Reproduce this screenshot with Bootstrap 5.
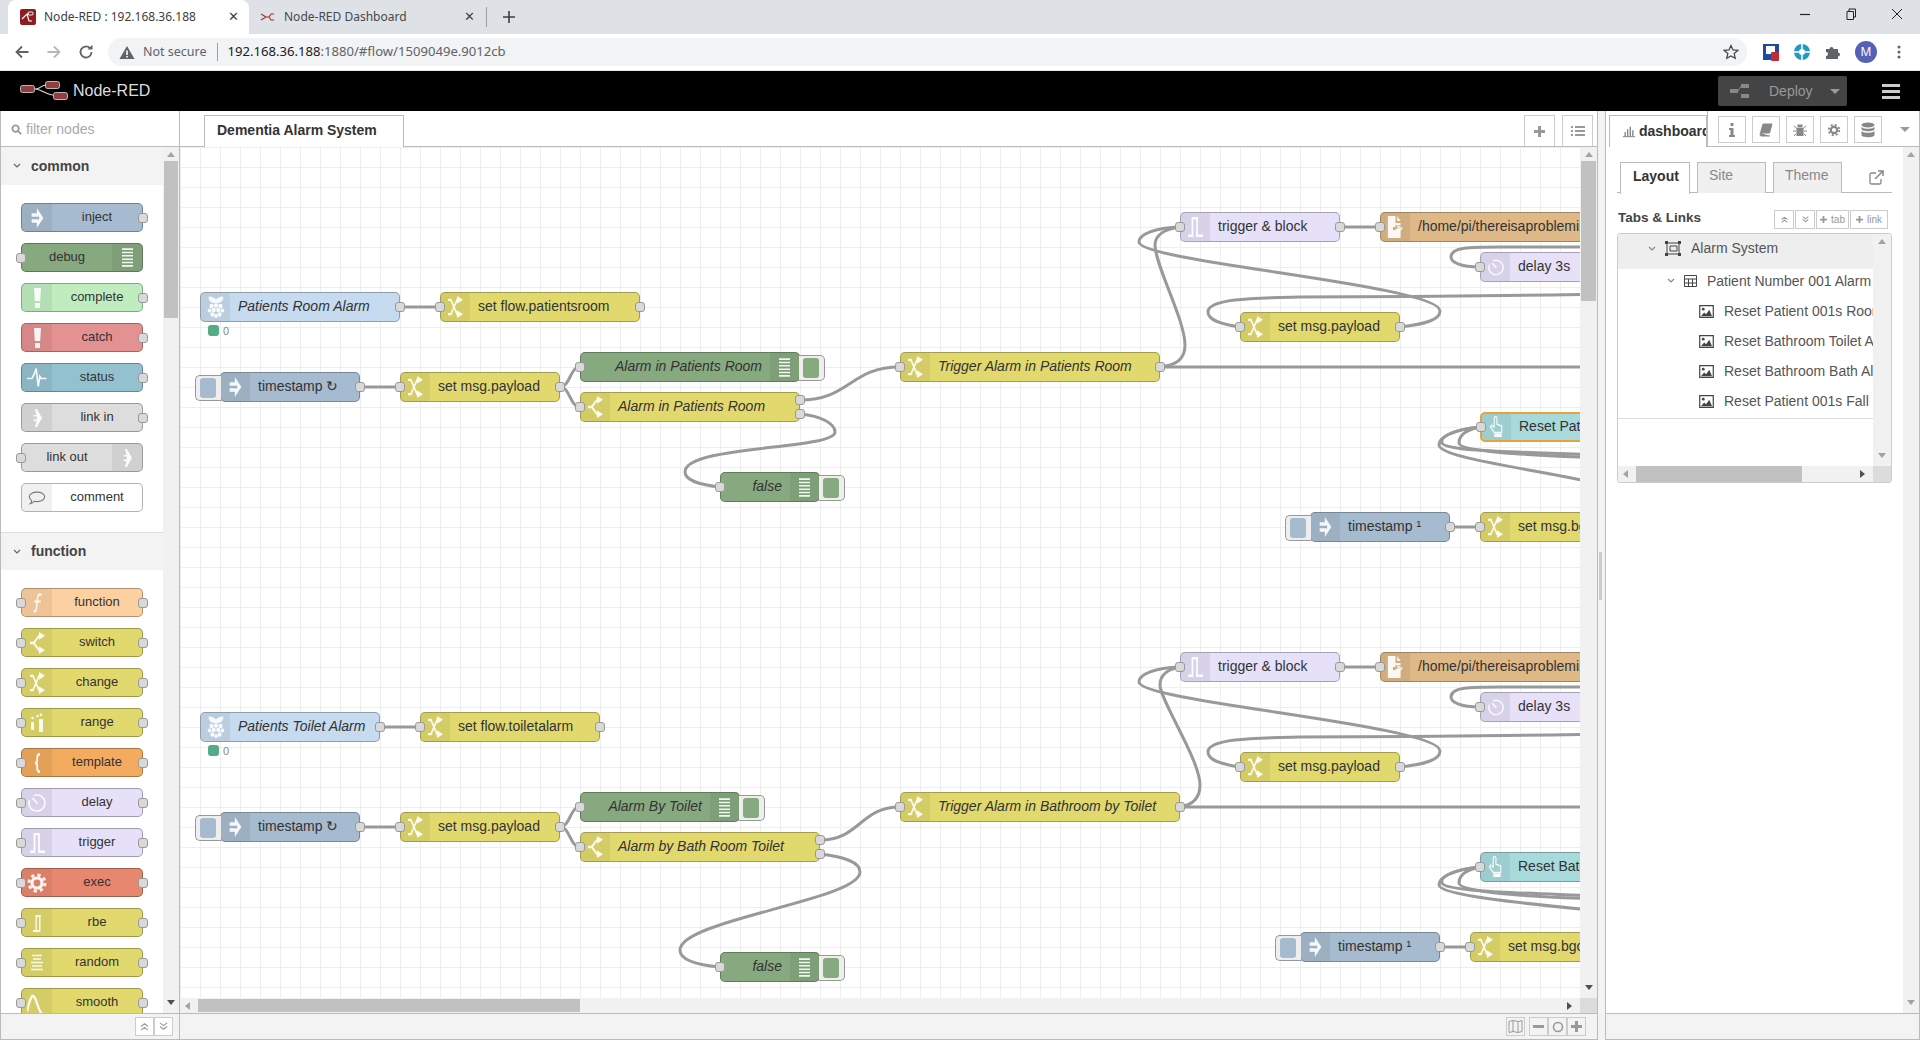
<!DOCTYPE html>
<html lang="en">
<head>
<meta charset="utf-8">
<title>Node-RED : 192.168.36.188</title>
<link href="https://cdn.jsdelivr.net/npm/bootstrap@5.3.0/dist/css/bootstrap.min.css" rel="stylesheet">
<style>
html,body{height:1040px;overflow:hidden}
body{font-family:"Liberation Sans",Arial,sans-serif;font-size:14px;color:#333;background:#fff}
.ui{font-family:"Noto Sans","Liberation Sans",sans-serif}
/* browser chrome */
.tabstrip{height:34px;background:#dee1e6;padding-left:8px;flex:none}
.ctab{width:241px;height:34px;font-size:12px;color:#45494d;padding-left:12px;border-radius:8px 8px 0 0}
.ctab.on{background:#fff;color:#3c4043}
.ctab .ttl{margin-left:8px;flex-grow:1;white-space:nowrap}
.ctab .xb{margin-right:10px;color:#444;font-size:13px}
.ctab2{width:236px;padding-left:11px}
.csep{width:1px;height:20px;background:#9aa0a6;margin-left:1px;margin-top:7px}
.plusb{margin-left:15px;margin-top:7px}
.winbtns{margin-left:auto;margin-right:16px;gap:32px;margin-top:7px;height:14px}
.toolbar{height:37px;background:#fff;flex:none;border-bottom:1px solid #e8e8e8}
.tb-nav{width:108px;padding-left:14px;gap:16px}
.omni{width:1639px;height:28px;background:#f1f3f4;border-radius:14px;font-size:12.5px;padding-left:11px;color:#5f6368}
.omni .bar{width:1px;height:18px;background:#9aa0a6;margin:0 10px}
.omni .addr{font-size:13.1px}
.omni .host{color:#202124}
.omni .star{margin-left:auto;margin-right:8px}
.ext{margin-left:16px;gap:14px}
.avatar{width:22px;height:22px;border-radius:50%;background:#5561b8;color:#fff;font-size:12px}
/* header */
.nr-head{height:40px;background:#000;flex:none;color:#ddd;font-size:16px;padding-left:20px}
.nr-title{margin-left:5px}
.deploy{width:129px;height:30px;background:#444;color:#999;border:0;border-radius:2px;padding:0 0 0 12px;font-size:14px;margin-left:auto}
.deploy:hover{background:#444;color:#999}
.dep-t{margin-left:19px}
.dep-c{margin-left:17px;border-top-color:#bbb}
.burger{width:18px;margin:0 20px 0 35px;gap:3px}
.burger span{height:3px;background:#ccc;display:block}
/* shell */
.shell{height:929px;flex:none}
.palette{width:180px;flex:none;border-left:1px solid #bbb;border-right:1px solid #bbb;background:#f3f3f3}
.pal-filter{height:36px;background:#fff;border-bottom:1px solid #bbb;color:#aaa;padding:1px 0 0 10px;flex:none}
.pal-body{height:866px;flex:none}
.pal-list{width:162px;flex:none;background:#fff}
.pal-cat{height:38px;background:#f3f3f3;padding-left:12px;font-weight:700;color:#444;font-size:14px;flex:none}
.pal-cat span{margin-left:10px}
.pal-cat2{border-top:1px solid #ddd}
.pal-items{padding:18px 0 9px 20px}
.pal-node{width:122px;height:29px;margin-bottom:11px;border:1px solid rgba(0,0,0,.3);border-radius:5px;font-size:13px;color:#333}
.pal-node .lbl{flex-grow:1;text-align:center;padding-bottom:1px}
.pal-node .ni{width:30px;height:100%;flex:none;background:rgba(0,0,0,.06);color:rgba(255,255,255,.9)}
.pal-node .ni.rr{border-radius:0 4px 4px 0}
.pal-node .ni.ll{border-radius:4px 0 0 4px}
.pal-foot{height:27px;background:#f3f3f3;border-top:1px solid #bbb;border-bottom:1px solid #bbb;padding-right:6px;flex:none}
.mini{width:19px;height:19px;background:#fff;border:1px solid #ccc;color:#999}
.sbar-v{width:16px;flex:none;background:#f1f1f1}
.thumb-v{height:157px;background:#c1c1c1;margin:0 1px}
.au,.ad,.al,.ar{display:block;width:0;height:0;border:4px solid transparent}
.au{border-top:0;border-bottom-color:#a3a3a3;border-bottom-width:5px;margin:5px auto 4px}
.ad{border-bottom:0;border-top-color:#505050;border-top-width:5px}
.ad.pale{border-top-color:#a3a3a3}
.al{border-left:0;border-right-color:#a3a3a3;border-right-width:5px}
.ar{border-right:0;border-left-color:#505050;border-left-width:5px}
/* ports shared */
.prt{position:absolute;width:10px;height:10px;background:#d9d9d9;border:1px solid #999;border-radius:3px;top:50%;margin-top:-5px}
.prt.lf{left:-6px}
.prt.rt{right:-6px}
.prt.up{top:8px;margin-top:-6px}
.prt.dn{top:21px;margin-top:-5px}
/* icon sizes */
.i-a{width:13px;height:20px}
.i-b{width:15px;height:22px}
.i-c{width:18px;height:22px}
.i-d{width:18px;height:19px}
.i-e{width:17px;height:22px}
.i-f{width:12px;height:18px}
.i-g{width:11px;height:19px}
/* colours */
.cy{background:#e2d96e}.cd{background:#87a980}.ci{background:#a6bbcf}.cc{background:#c0edc0}.cr{background:#e49191}
.cs{background:#94c1d0}.cl{background:#ddd}.cw{background:#fff}.cf{background:#fdd0a2}.ct{background:#f2ab5f}
.cv{background:#e6e0f8}.ce{background:#e8876f}.cp{background:#c6dbef}.cb{background:#deb887}.cn{background:#a8dadc}
/* workspace */
.work{width:1417px;flex:none}
.wtabs{height:36px;border-bottom:1px solid #bbb;padding-left:24px;flex:none;background:#fff}
.wtab{width:200px;height:32px;margin-top:4px;border:1px solid #bbb;border-bottom:0;background:#fff;font-weight:700;padding:0 0 2px 12px;font-size:14px;color:#333;margin-bottom:-1px;position:relative}
.wbtn{width:31px;height:31px;margin-top:4px;border:1px solid #ccc;border-bottom:0;color:#999;margin-left:7px}
.wbtn.first{margin-left:auto}
.wbtn.last{margin-right:4px}
.wmid{height:851px;flex:none}
.canvas{width:1400px;height:851px;flex:none;background-color:#fff;background-image:linear-gradient(#eee 1px,transparent 1px),linear-gradient(90deg,#eee 1px,transparent 1px);background-size:20px 20px}
.wires{position:absolute;left:0;top:0;width:1400px;height:851px}
.wires path{fill:none;stroke:#999;stroke-width:3}
.fn{position:absolute;height:30px;border:1px solid rgba(0,0,0,.28);border-radius:5px;font-size:14px;color:#333;white-space:nowrap}
.fn .ni{width:29px;height:100%;flex:none;background:rgba(0,0,0,.06);color:rgba(255,255,255,.9)}
.fn .ni.ll{border-radius:4px 0 0 4px}
.fn .ni.rr{border-radius:0 4px 4px 0}
.fn .lbl{padding:0 8px 1px;overflow:hidden}
.fn .em{font-style:italic}
.fn.sel{border:2px solid #e9a23b}
.nbtn{position:absolute;width:26px;height:26px;background:#eee;border:1px solid #999;top:2px;display:flex;align-items:center}
.nbtn b{display:block;width:16px;height:20px;border-radius:3px}
.nbtn.bl{left:-26px;border-radius:5px 0 0 5px;border-right:0;padding-left:4px}
.nbtn.br{right:-26px;border-radius:0 5px 5px 0;border-left:0;padding-left:4px}
.stat{position:absolute;font-size:11px;color:#888;line-height:12px}
.stat b{display:inline-block;width:11px;height:11px;background:#5a8;border-radius:3px;margin-right:4px;vertical-align:-1px}
.vbar{width:17px;flex:none;background:#f1f1f1}
.vbar .thumb-v{height:140px}
.hbar{height:15px;background:#f1f1f1;flex:none;padding-left:5px}
.thumb-h{width:382px;height:13px;background:#c1c1c1;margin-left:8px}
.corner{width:17px;height:15px;background:#dcdcdc;margin-left:auto}
.wfoot{height:27px;background:#f3f3f3;border-top:1px solid #bbb;border-bottom:1px solid #bbb;flex:none;padding-right:11px;color:#999}
.fbtn{width:19px;height:19px;border:1px solid #ccc;background:#f3f3f3;color:#999}
.split{width:8px;flex:none;background:#f3f3f3;border-left:1px solid #bbb}
.split span{display:block;width:3px;height:48px;background:#ccc;margin-left:1px}
/* sidebar */
.side{width:315px;flex:none;border-left:1px solid #bbb;border-right:1px solid #bbb}
.stabs{height:36px;flex:none}
.stab{width:98px;height:32px;margin-top:4px;margin-left:3px;border:1px solid #bbb;border-bottom:0;font-weight:700;color:#333;padding-left:13px;overflow:hidden;white-space:nowrap;position:relative;z-index:1;margin-bottom:-1px}
.sbtns{flex-grow:1;border-left:1px solid #bbb;border-bottom:1px solid #bbb;padding:2px 0 0 10px;gap:6px}
.sbtn{width:28px;height:27px;border:1px solid #ccc;color:#888;flex:none}
.scar{margin-left:12px}
.car{width:0;height:0;border:5px solid transparent;border-top-color:#999;border-bottom:0;display:block}
.smid{height:866px;flex:none}
.spane{width:297px;flex:none;padding:15px 11px 0 11px;border-top:0}
.itabs{height:31px;border-bottom:1px solid #bbb;padding-left:3px;gap:7px}
.itab{width:69px;height:31px;border:1px solid #bbb;border-bottom:0;background:#f0f0f0;color:#888;font-size:14px;padding:0 0 5px 11px}
.itab.on{background:#fff;color:#333;font-weight:700;margin-bottom:-1px;position:relative;height:32px;width:70px;padding-left:12px}
.xlink{margin-left:auto;margin-right:8px;color:#888;align-self:center}
.tl-head{height:40px;padding-top:17px;font-weight:700;font-size:13.5px;color:#444;flex:none}
.tl-head>span{margin:-2px 0 0 1px}
.tbs{margin-left:auto;gap:1px;margin-right:4px;font-weight:400;font-size:10px;color:#999}
.tb{height:19px;border:1px solid #ccc;background:#fff;color:#999}
.tb.s{width:20px}.tb.m{width:33px}.tb.l{width:38px}
.tree{width:275px;height:250px;border:1px solid #ccc;border-radius:3px;background:#fff;overflow:hidden}
.treebody{height:232px;flex:none}
.treelist{width:255px;flex:none;overflow:hidden;color:#555;font-size:14px}
.tr1{height:35px;background:#eee;padding:0 0 6px 30px;white-space:nowrap;flex:none}
.tr2{height:27px;padding:0 0 3px 49px;white-space:nowrap;flex:none}
.tr3{height:30px;padding-left:81px;white-space:nowrap;flex:none}
.trline{height:3px;border-bottom:1px solid #ddd;flex:none}
.chev{margin-right:9px;flex:none;color:#888}
.tric{margin-right:10px;flex:none;color:#444}
.sbar-t{width:18px;flex:none;background:#f1f1f1}
.hb{height:16px;background:#f1f1f1;padding-left:5px}
.thumb-t{width:166px;height:16px;background:#c1c1c1;margin-left:8px}
.co{width:18px;height:16px;background:#dcdcdc;margin-left:auto}
.sfoot{height:27px;background:#f3f3f3;border-top:1px solid #bbb;border-bottom:1px solid #bbb;flex:none}
</style>
</head>
<body>
<svg class="d-none" xmlns="http://www.w3.org/2000/svg">
<symbol id="i-inject" viewBox="0 0 20 20" preserveAspectRatio="none"><path d="M1 7h10M1 13h10" stroke="currentColor" stroke-width="3.400" fill="none"/><path d="M9 0l10 10-10 10v-5.500l4-4.500-4-4.500z" fill="currentColor"/></symbol>
<symbol id="i-debug" viewBox="0 0 10 17" preserveAspectRatio="none"><path d="M0 1h10M0 4h10M0 7h10M0 10h10M0 13h10M0 16h10" stroke="currentColor" stroke-width="1.400"/></symbol>
<symbol id="i-alert" viewBox="0 0 7 20" preserveAspectRatio="none"><path d="M0 0h7l-.8 13H.8zM1 15h5v5H1z" fill="currentColor"/></symbol>
<symbol id="i-status" viewBox="0 0 20 20"><path d="M0 10.500h5l2-4 2.200-6 2 18 1.600-10 1.200 2h5.500" stroke="currentColor" stroke-width="1.700" fill="none"/></symbol>
<symbol id="i-link" viewBox="0 0 20 20" preserveAspectRatio="none"><path d="M6 1h3l8 9-8 9H6l2.500-6H4v-1.600l5 .1v-3l-5 .1V7h4.500z" fill="currentColor"/></symbol>
<symbol id="i-comment" viewBox="0 0 20 20"><path d="M10 3.500c5 0 8.500 2.300 8.500 5.200S15 14 10 14c-1 0-2-.1-3-.3-1 1.200-2.500 2.200-4.500 2.600 1-1 1.500-2 1.700-3.400C2.500 11.800 1.500 10.300 1.500 8.700 1.500 5.800 5 3.500 10 3.500z" fill="none" stroke="currentColor" stroke-width="1.200"/></symbol>
<symbol id="i-func" viewBox="0 0 20 20" preserveAspectRatio="none"><path d="M16 2c-3.500-1.500-5.500 0-6 3.500l-1.600 10c-.5 3-2.500 3.500-4.400 2.200M5 8.500h10" stroke="currentColor" stroke-width="2.200" fill="none"/></symbol>
<symbol id="i-switch" viewBox="0 0 20 20" preserveAspectRatio="none"><path d="M0 10h5l7-6.500h2M5 10l7 6.500h2" stroke="currentColor" stroke-width="2.200" fill="none"/><path d="M12 0l8 3.500-8 3.500zM12 13l8 3.500-8 3.500z" fill="currentColor"/></symbol>
<symbol id="i-change" viewBox="0 0 20 20" preserveAspectRatio="none"><path d="M0 3.500h4l8 13h2M0 16.500h4l8-13h2" stroke="currentColor" stroke-width="2.100" fill="none"/><path d="M12 0l8 3.500-8 3.500zM12 13l8 3.500-8 3.500z" fill="currentColor"/></symbol>
<symbol id="i-range" viewBox="0 0 20 20"><path d="M4 9h3v8H4zM12 6h4v13h-4z" fill="currentColor"/><circle cx="5.500" cy="5" r="1.300" fill="currentColor"/><circle cx="10.500" cy="3" r="1.300" fill="currentColor"/><circle cx="14" cy="1.800" r="1.300" fill="currentColor"/></symbol>
<symbol id="i-template" viewBox="0 0 20 20" preserveAspectRatio="none"><path d="M14 1c-3.500 0-4.500 1.200-4.500 3.500v3C9.500 9 8.500 10 6 10c2.500 0 3.500 1 3.500 2.500v3c0 2.300 1 3.500 4.500 3.500" stroke="currentColor" stroke-width="2.800" fill="none"/></symbol>
<symbol id="i-delay" viewBox="0 0 20 20"><path d="M7 2.500A8 8 0 1 1 2.500 7" stroke="currentColor" stroke-width="1.500" fill="none"/><path d="M10.500 10.500L5.500 5" stroke="currentColor" stroke-width="1.800"/></symbol>
<symbol id="i-trigger" viewBox="0 0 20 20" preserveAspectRatio="none"><path d="M0 18h6V2h6v16h8" stroke="currentColor" stroke-width="2.400" fill="none"/></symbol>
<symbol id="i-exec" viewBox="0 0 20 20"><circle cx="10" cy="10" r="5" fill="none" stroke="currentColor" stroke-width="3.200"/><circle cx="10" cy="10" r="8" fill="none" stroke="currentColor" stroke-width="3" stroke-dasharray="3.300 3"/></symbol>
<symbol id="i-rbe" viewBox="0 0 20 20" preserveAspectRatio="none"><path d="M3 18h5V3h7M13.500 3v15H8" stroke="currentColor" stroke-width="2.200" fill="none"/></symbol>
<symbol id="i-random" viewBox="0 0 20 20"><path d="M5 2.500h10M6 6h8M4 9.500h12M5 13h10M4 16.500h12" stroke="currentColor" stroke-width="1.600"/></symbol>
<symbol id="i-smooth" viewBox="0 0 20 20" preserveAspectRatio="none"><path d="M0 17C4 3 6 1 9 8s5 13 10 12" stroke="currentColor" stroke-width="2.200" fill="none"/></symbol>
<symbol id="i-rpi" viewBox="0 0 20 22" preserveAspectRatio="none"><path d="M2 .5c3 0 6 1 8 3 2-2 5-3 8-3 .5 3-1.500 5.500-4 6.200-2.500.5-5.500.5-8 0C3.500 6 1.500 3.500 2 .5z" fill="currentColor"/><circle cx="10" cy="9.500" r="2.300" fill="currentColor"/><circle cx="5" cy="10" r="2.300" fill="currentColor"/><circle cx="15" cy="10" r="2.300" fill="currentColor"/><circle cx="2.800" cy="14.500" r="2.100" fill="currentColor"/><circle cx="7.500" cy="14" r="2.300" fill="currentColor"/><circle cx="12.500" cy="14" r="2.300" fill="currentColor"/><circle cx="17.200" cy="14.500" r="2.100" fill="currentColor"/><circle cx="6" cy="18.500" r="2.200" fill="currentColor"/><circle cx="14" cy="18.500" r="2.200" fill="currentColor"/><circle cx="10" cy="20" r="2" fill="currentColor"/></symbol>
<symbol id="i-file" viewBox="0 0 20 22" preserveAspectRatio="none"><path d="M1 0h9v7h6v2h-6v2H7v3h3v-1h6v9H1zM12 0l4 5h-4z" fill="currentColor"/><path d="M12 8l7 4.500-7 4.500z" fill="currentColor" opacity=".75"/></symbol>
<symbol id="i-hand" viewBox="0 0 20 24" preserveAspectRatio="none"><path d="M7 11V2.500a1.800 1.800 0 0 1 3.600 0V9l6.400 2v7H7l-5-6 1.500-2 3.500 2z" fill="none" stroke="currentColor" stroke-width="1.500"/><path d="M7 19h10v4H7z" fill="currentColor"/></symbol>
<symbol id="i-logo" viewBox="0 0 48 20"><path d="M15 8C21 8 21 4 26 4M15 8C21 8 27 14 33 14" stroke="#ddd" stroke-width="1.200" fill="none"/><rect x=".5" y="4.500" width="14" height="7" rx="2" fill="#8f3e42" stroke="#ddd" stroke-width=".8"/><rect x="25.500" y=".5" width="14" height="7" rx="2" fill="#8f3e42" stroke="#ddd" stroke-width=".8"/><rect x="33.500" y="11.500" width="14" height="7" rx="2" fill="#8f3e42" stroke="#ddd" stroke-width=".8"/></symbol>
<symbol id="i-tree-img" viewBox="0 0 16 14"><path d="M.7.7h14.600v12.600H.7z" fill="none" stroke="currentColor" stroke-width="1.300"/><circle cx="4.500" cy="4.500" r="1.500" fill="currentColor"/><path d="M2 12l3.500-4 2 2 3.500-5 3 7z" fill="currentColor"/></symbol>
<symbol id="i-gear" viewBox="0 0 20 20"><circle cx="10" cy="10" r="4.500" fill="none" stroke="currentColor" stroke-width="3"/><circle cx="10" cy="10" r="7.500" fill="none" stroke="currentColor" stroke-width="2.600" stroke-dasharray="3 2.900"/></symbol>
</svg>

<div class="d-flex flex-column vh-100 overflow-hidden">

  <!-- browser tab strip -->
  <div class="tabstrip d-flex ui">
    <div class="ctab on d-flex align-items-center">
      <svg width="16" height="16" viewBox="0 0 16 16"><rect width="16" height="16" rx="2" fill="#8f1d1f"/><path d="M2 10l5-5h2M7 5l2 7h3" stroke="#fff" stroke-width="1.200" fill="none"/><rect x="8" y="3" width="5" height="3" rx="1" fill="none" stroke="#fff" stroke-width=".9"/></svg>
      <span class="ttl">Node-RED : 192.168.36.188</span><span class="xb">✕</span>
    </div>
    <div class="ctab ctab2 d-flex align-items-center">
      <svg width="16" height="16" viewBox="0 0 16 16"><path d="M1 5l5 3-5 3M6 8h3M9 8l2-3h3M9 8l2 3h3" fill="none" stroke="#a33" stroke-width="1.200"/></svg>
      <span class="ttl">Node-RED Dashboard</span><span class="xb">✕</span>
    </div>
    <div class="csep"></div>
    <svg class="plusb" width="14" height="20" viewBox="0 0 14 20"><path d="M7 4v12M1 10h12" stroke="#3c4043" stroke-width="1.600"/></svg>
    <div class="winbtns d-flex">
      <svg width="14" height="14" viewBox="0 0 14 14"><path d="M2 7.500h10" stroke="#222" stroke-width="1.200"/></svg>
      <svg width="14" height="14" viewBox="0 0 14 14"><path d="M3 4.500h6.500v8H3zM5 4.500V2h6.500v8H9.500" fill="none" stroke="#222"/></svg>
      <svg width="14" height="14" viewBox="0 0 14 14"><path d="M2 2l10 10M12 2L2 12" stroke="#222"/></svg>
    </div>
  </div>

  <!-- browser toolbar -->
  <div class="toolbar d-flex align-items-center ui">
    <div class="tb-nav d-flex align-items-center">
      <svg width="16" height="16" viewBox="0 0 16 16"><path d="M14.500 8H2.500M8 2.500L2.500 8 8 13.500" fill="none" stroke="#5f6368" stroke-width="1.800"/></svg>
      <svg width="16" height="16" viewBox="0 0 16 16"><path d="M1.500 8h12M8 2.500L13.500 8 8 13.500" fill="none" stroke="#b4b8bc" stroke-width="1.800"/></svg>
      <svg width="16" height="16" viewBox="0 0 16 16"><path d="M13.500 8A5.500 5.500 0 1 1 11.800 4" fill="none" stroke="#5f6368" stroke-width="1.800"/><path d="M9.500 5.500h5V.8z" fill="#5f6368"/></svg>
    </div>
    <div class="omni d-flex align-items-center">
      <svg width="16" height="15" viewBox="0 0 16 15" class="me-1"><path d="M8 1l7.500 13H.5z" fill="#5f6368"/><path d="M7.200 5.500h1.600v4.500H7.200zM7.200 11h1.600v1.500H7.200z" fill="#fff"/></svg>
      <span class="ms-1">Not secure</span><span class="bar"></span>
      <span class="addr"><span class="host">192.168.36.188</span>:1880/#flow/1509049e.9012cb</span>
      <svg class="star" width="16" height="16" viewBox="0 0 16 16"><path d="M8 1.500l2 4.400 4.800.5-3.600 3.200 1 4.700L8 11.900l-4.200 2.400 1-4.700L1.200 6.400 6 5.900z" fill="none" stroke="#45494d" stroke-width="1.300"/></svg>
    </div>
    <div class="ext d-flex align-items-center">
      <svg width="16" height="18" viewBox="0 0 16 18"><path d="M0 1h16v16H0z" fill="#1a4da0"/><path d="M3 3h9v8H3z" fill="#fff"/><rect x="8" y="9" width="8" height="9" rx="1" fill="#c22a3a"/></svg>
      <svg width="18" height="18" viewBox="0 0 18 18"><circle cx="9" cy="9" r="8" fill="#2499c2"/><circle cx="9" cy="9" r="3" fill="#fff"/><path d="M9 1v5M17 9h-5M9 17v-5M1 9h5" stroke="#fff" stroke-width="1.500"/></svg>
      <svg width="16" height="16" viewBox="0 0 16 16"><path d="M1 5h3.500a2 2 0 1 1 4 0H13v3.500a2 2 0 1 1 0 4V15H1v-3a2 2 0 1 0 0-4z" fill="#5f6368"/></svg>
      <span class="avatar d-flex align-items-center justify-content-center">M</span>
      <svg width="16" height="16" viewBox="0 0 16 16"><circle cx="8" cy="3" r="1.500" fill="#5f6368"/><circle cx="8" cy="8" r="1.500" fill="#5f6368"/><circle cx="8" cy="13" r="1.500" fill="#5f6368"/></svg>
    </div>
  </div>

  <!-- Node-RED header -->
  <header class="nr-head d-flex align-items-center">
    <svg width="48" height="20" viewBox="0 0 48 20"><use href="#i-logo"/></svg>
    <span class="nr-title">Node-RED</span>
    <button class="btn deploy d-flex align-items-center" type="button">
      <svg width="20" height="18" viewBox="0 0 20 18"><path d="M0 7h8v4H0zM11 2h8v4h-8zM11 12h8v4h-8z" fill="#888"/><path d="M8 9l3-5" stroke="#888"/></svg>
      <span class="dep-t">Deploy</span>
      <span class="car dep-c"></span>
    </button>
    <div class="burger d-flex flex-column"><span></span><span></span><span></span></div>
  </header>

  <main class="shell d-flex">
    <!-- palette -->
    <aside class="palette d-flex flex-column">
      <div class="pal-filter d-flex align-items-center">
        <svg width="11" height="11" viewBox="0 0 12 12" class="me-1"><circle cx="5" cy="5" r="3.500" fill="none" stroke="#999" stroke-width="2"/><path d="M7.500 7.500L11 11" stroke="#999" stroke-width="2"/></svg>filter nodes
      </div>
      <div class="pal-body d-flex overflow-hidden">
        <div class="pal-list overflow-hidden">
          <div class="pal-cat d-flex align-items-center"><svg width="8" height="6" viewBox="0 0 8 6"><path d="M1 1l3 3 3-3" fill="none" stroke="#666" stroke-width="1.200"/></svg><span>common</span></div>
          <div class="pal-items">
            <div class="pal-node ci d-flex align-items-center position-relative"><span class="ni ll d-flex align-items-center justify-content-center"><svg class="i-a"><use href="#i-inject"/></svg></span><span class="lbl">inject</span><i class="prt rt"></i></div>
            <div class="pal-node cd d-flex flex-row-reverse align-items-center position-relative"><span class="ni rr d-flex align-items-center justify-content-center"><svg class="i-g"><use href="#i-debug"/></svg></span><span class="lbl">debug</span><i class="prt lf"></i></div>
            <div class="pal-node cc d-flex align-items-center position-relative"><span class="ni ll d-flex align-items-center justify-content-center"><svg width="7" height="20"><use href="#i-alert"/></svg></span><span class="lbl">complete</span><i class="prt rt"></i></div>
            <div class="pal-node cr d-flex align-items-center position-relative"><span class="ni ll d-flex align-items-center justify-content-center"><svg width="7" height="20"><use href="#i-alert"/></svg></span><span class="lbl">catch</span><i class="prt rt"></i></div>
            <div class="pal-node cs d-flex align-items-center position-relative"><span class="ni ll d-flex align-items-center justify-content-center"><svg width="20" height="20"><use href="#i-status"/></svg></span><span class="lbl">status</span><i class="prt rt"></i></div>
            <div class="pal-node cl d-flex align-items-center position-relative"><span class="ni ll d-flex align-items-center justify-content-center"><svg class="i-a"><use href="#i-link"/></svg></span><span class="lbl">link in</span><i class="prt rt"></i></div>
            <div class="pal-node cl d-flex flex-row-reverse align-items-center position-relative"><span class="ni rr d-flex align-items-center justify-content-center"><svg class="i-a"><use href="#i-link"/></svg></span><span class="lbl">link out</span><i class="prt lf"></i></div>
            <div class="pal-node cw d-flex align-items-center position-relative"><span class="ni ll d-flex align-items-center justify-content-center text-black-50"><svg width="18" height="18"><use href="#i-comment"/></svg></span><span class="lbl">comment</span></div>
          </div>
          <div class="pal-cat pal-cat2 d-flex align-items-center"><svg width="8" height="6" viewBox="0 0 8 6"><path d="M1 1l3 3 3-3" fill="none" stroke="#666" stroke-width="1.200"/></svg><span>function</span></div>
          <div class="pal-items">
            <div class="pal-node cf d-flex align-items-center position-relative"><span class="ni ll d-flex align-items-center justify-content-center"><svg class="i-a"><use href="#i-func"/></svg></span><span class="lbl">function</span><i class="prt lf"></i><i class="prt rt"></i></div>
            <div class="pal-node cy d-flex align-items-center position-relative"><span class="ni ll d-flex align-items-center justify-content-center"><svg class="i-b"><use href="#i-switch"/></svg></span><span class="lbl">switch</span><i class="prt lf"></i><i class="prt rt"></i></div>
            <div class="pal-node cy d-flex align-items-center position-relative"><span class="ni ll d-flex align-items-center justify-content-center"><svg class="i-b"><use href="#i-change"/></svg></span><span class="lbl">change</span><i class="prt lf"></i><i class="prt rt"></i></div>
            <div class="pal-node cy d-flex align-items-center position-relative"><span class="ni ll d-flex align-items-center justify-content-center"><svg width="20" height="20"><use href="#i-range"/></svg></span><span class="lbl">range</span><i class="prt lf"></i><i class="prt rt"></i></div>
            <div class="pal-node ct d-flex align-items-center position-relative"><span class="ni ll d-flex align-items-center justify-content-center"><svg class="i-a"><use href="#i-template"/></svg></span><span class="lbl">template</span><i class="prt lf"></i><i class="prt rt"></i></div>
            <div class="pal-node cv d-flex align-items-center position-relative"><span class="ni ll d-flex align-items-center justify-content-center"><svg width="20" height="20"><use href="#i-delay"/></svg></span><span class="lbl">delay</span><i class="prt lf"></i><i class="prt rt"></i></div>
            <div class="pal-node cv d-flex align-items-center position-relative"><span class="ni ll d-flex align-items-center justify-content-center"><svg class="i-b"><use href="#i-trigger"/></svg></span><span class="lbl">trigger</span><i class="prt lf"></i><i class="prt rt"></i></div>
            <div class="pal-node ce d-flex align-items-center position-relative"><span class="ni ll d-flex align-items-center justify-content-center"><svg width="20" height="20"><use href="#i-exec"/></svg></span><span class="lbl">exec</span><i class="prt lf"></i><i class="prt rt"></i></div>
            <div class="pal-node cy d-flex align-items-center position-relative"><span class="ni ll d-flex align-items-center justify-content-center"><svg class="i-a"><use href="#i-rbe"/></svg></span><span class="lbl">rbe</span><i class="prt lf"></i><i class="prt rt"></i></div>
            <div class="pal-node cy d-flex align-items-center position-relative"><span class="ni ll d-flex align-items-center justify-content-center"><svg width="20" height="20"><use href="#i-random"/></svg></span><span class="lbl">random</span><i class="prt lf"></i><i class="prt rt"></i></div>
            <div class="pal-node cy d-flex align-items-center position-relative"><span class="ni ll d-flex align-items-center justify-content-center"><svg width="20" height="24"><use href="#i-smooth"/></svg></span><span class="lbl">smooth</span><i class="prt lf"></i><i class="prt rt"></i></div>
          </div>
        </div>
        <div class="sbar-v d-flex flex-column">
          <span class="au"></span>
          <div class="thumb-v"></div>
          <span class="ad mt-auto mx-auto mb-2"></span>
        </div>
      </div>
      <div class="pal-foot d-flex align-items-center justify-content-end">
        <span class="mini d-flex align-items-center justify-content-center"><svg width="9" height="9" viewBox="0 0 10 10"><path d="M1 5l4-3 4 3M1 9l4-3 4 3" fill="none" stroke="currentColor" stroke-width="1.300"/></svg></span>
        <span class="mini d-flex align-items-center justify-content-center"><svg width="9" height="9" viewBox="0 0 10 10"><path d="M1 1l4 3 4-3M1 5l4 3 4-3" fill="none" stroke="currentColor" stroke-width="1.300"/></svg></span>
      </div>
    </aside>

    <!-- workspace -->
    <section class="work d-flex flex-column">
      <div class="wtabs d-flex">
        <div class="wtab d-flex align-items-center">Dementia Alarm System</div>
        <div class="wbtn first d-flex align-items-center justify-content-center"><svg width="13" height="13" viewBox="0 0 13 13"><path d="M6.500 1v11M1 6.500h11" stroke="currentColor" stroke-width="3"/></svg></div>
        <div class="wbtn last d-flex align-items-center justify-content-center"><svg width="14" height="12" viewBox="0 0 14 12"><path d="M4 2h10M4 6h10M4 10h10M0 2h2M0 6h2M0 10h2" stroke="currentColor" stroke-width="2"/></svg></div>
      </div>
      <div class="wmid d-flex">
        <div class="canvas position-relative overflow-hidden">
          <svg class="wires" viewBox="180 147 1400 851">
            <path d="M400 307H440"/>
            <path d="M360 387H400"/>
            <path d="M560 387C570 387 570 367 580 367"/>
            <path d="M560 387C570 387 570 407 580 407"/>
            <path d="M800 400C850 400 850 367 900 367"/>
            <path d="M800 414C822 416 835 424 835 432C835 450 685 445 685 472C685 480 700 485 720 487"/>
            <path d="M1160 367H1600"/>
            <path d="M1160 367C1178 365 1185 358 1185 345C1185 320 1155 265 1155 245C1155 235 1165 229 1180 227"/>
            <path d="M1400 327C1425 324 1440 320 1440 311C1440 285 1139 262 1139 242C1139 234 1155 228 1180 227"/>
            <path d="M1240 327C1220 324 1208 320 1208 312C1208 298 1260 298 1300 297C1400 297 1500 296 1600 294"/>
            <path d="M1480 267C1460 267 1451 262 1451 257C1451 247 1470 247 1500 247H1600"/>
            <path d="M1340 227H1380"/>
            <path d="M1450 527H1480"/>
            <path d="M1480 427C1450 430 1439 438 1439 445C1439 458 1540 470 1600 484"/>
            <path d="M1480 427C1465 430 1459 436 1459 443C1459 452 1530 455 1600 458"/>
            <path d="M1480 427C1450 430 1440 438 1442 443C1445 452 1530 452 1600 455"/>

            <path d="M380 727H420"/>
            <path d="M360 827H400"/>
            <path d="M560 827C570 827 570 807 580 807"/>
            <path d="M560 827C570 827 570 847 580 847"/>
            <path d="M820 840C860 840 860 807 900 807"/>
            <path d="M820 854C845 857 860 862 860 872C860 900 680 920 680 950C680 960 698 965 720 967"/>
            <path d="M1180 807H1600"/>
            <path d="M1180 807C1192 805 1200 798 1200 785C1200 760 1160 700 1160 685C1160 675 1168 669 1180 667"/>
            <path d="M1400 767C1425 764 1440 760 1440 751C1440 725 1139 702 1139 682C1139 674 1155 668 1180 667"/>
            <path d="M1240 767C1220 764 1208 760 1208 752C1208 738 1260 738 1300 737C1400 737 1500 736 1600 734"/>
            <path d="M1480 707C1460 707 1451 702 1451 697C1451 687 1470 687 1500 687H1600"/>
            <path d="M1340 667H1380"/>
            <path d="M1440 947H1470"/>
            <path d="M1480 867C1450 870 1439 878 1439 885C1439 896 1540 905 1600 911"/>
            <path d="M1480 867C1465 870 1459 876 1459 883C1459 892 1530 897 1600 899"/>
            <path d="M1480 867C1450 870 1440 878 1442 883C1445 892 1530 893 1600 896"/>
          </svg>

          <!-- top group -->
          <div class="fn cp d-flex align-items-center" style="left:20px;top:145px;width:200px"><span class="ni ll d-flex align-items-center justify-content-center"><svg class="i-c"><use href="#i-rpi"/></svg></span><span class="lbl em">Patients Room Alarm</span><i class="prt rt"></i></div>
          <div class="stat" style="left:28px;top:178px"><b></b>0</div>
          <div class="fn cy d-flex align-items-center" style="left:260px;top:145px;width:200px"><span class="ni ll d-flex align-items-center justify-content-center"><svg class="i-b"><use href="#i-change"/></svg></span><span class="lbl">set flow.patientsroom</span><i class="prt lf"></i><i class="prt rt"></i></div>
          <div class="fn ci d-flex align-items-center" style="left:40px;top:225px;width:140px"><span class="nbtn bl"><b class="ci"></b></span><span class="ni ll d-flex align-items-center justify-content-center"><svg class="i-a"><use href="#i-inject"/></svg></span><span class="lbl">timestamp ↻</span><i class="prt rt"></i></div>
          <div class="fn cy d-flex align-items-center" style="left:220px;top:225px;width:160px"><span class="ni ll d-flex align-items-center justify-content-center"><svg class="i-b"><use href="#i-change"/></svg></span><span class="lbl">set msg.payload</span><i class="prt lf"></i><i class="prt rt"></i></div>
          <div class="fn cd d-flex flex-row-reverse align-items-center" style="left:400px;top:205px;width:220px"><span class="nbtn br"><b class="cd"></b></span><span class="ni rr d-flex align-items-center justify-content-center"><svg class="i-g"><use href="#i-debug"/></svg></span><span class="lbl em">Alarm in Patients Room</span><i class="prt lf"></i></div>
          <div class="fn cy d-flex align-items-center" style="left:400px;top:245px;width:220px"><span class="ni ll d-flex align-items-center justify-content-center"><svg class="i-b"><use href="#i-switch"/></svg></span><span class="lbl em">Alarm in Patients Room</span><i class="prt lf"></i><i class="prt rt up"></i><i class="prt rt dn"></i></div>
          <div class="fn cd d-flex flex-row-reverse align-items-center" style="left:540px;top:325px;width:100px"><span class="nbtn br"><b class="cd"></b></span><span class="ni rr d-flex align-items-center justify-content-center"><svg class="i-g"><use href="#i-debug"/></svg></span><span class="lbl em">false</span><i class="prt lf"></i></div>
          <div class="fn cy d-flex align-items-center" style="left:720px;top:205px;width:260px"><span class="ni ll d-flex align-items-center justify-content-center"><svg class="i-b"><use href="#i-change"/></svg></span><span class="lbl em">Trigger Alarm in Patients Room</span><i class="prt lf"></i><i class="prt rt"></i></div>
          <div class="fn cv d-flex align-items-center" style="left:1000px;top:65px;width:160px"><span class="ni ll d-flex align-items-center justify-content-center"><svg class="i-b"><use href="#i-trigger"/></svg></span><span class="lbl">trigger &amp; block</span><i class="prt lf"></i><i class="prt rt"></i></div>
          <div class="fn cb d-flex align-items-center" style="left:1200px;top:65px;width:300px"><span class="ni ll d-flex align-items-center justify-content-center"><svg class="i-e"><use href="#i-file"/></svg></span><span class="lbl">/home/pi/thereisaproblemintheroom</span><i class="prt lf"></i></div>
          <div class="fn cv d-flex align-items-center" style="left:1300px;top:105px;width:160px"><span class="ni ll d-flex align-items-center justify-content-center"><svg class="i-d"><use href="#i-delay"/></svg></span><span class="lbl">delay 3s</span><i class="prt lf"></i></div>
          <div class="fn cy d-flex align-items-center" style="left:1060px;top:165px;width:160px"><span class="ni ll d-flex align-items-center justify-content-center"><svg class="i-b"><use href="#i-change"/></svg></span><span class="lbl">set msg.payload</span><i class="prt lf"></i><i class="prt rt"></i></div>
          <div class="fn cn sel d-flex align-items-center" style="left:1300px;top:265px;width:200px"><span class="ni ll d-flex align-items-center justify-content-center"><svg class="i-b"><use href="#i-hand"/></svg></span><span class="lbl">Reset Patient</span><i class="prt lf"></i></div>
          <div class="fn ci d-flex align-items-center" style="left:1130px;top:365px;width:140px"><span class="nbtn bl"><b class="ci"></b></span><span class="ni ll d-flex align-items-center justify-content-center"><svg class="i-a"><use href="#i-inject"/></svg></span><span class="lbl">timestamp ¹</span><i class="prt rt"></i></div>
          <div class="fn cy d-flex align-items-center" style="left:1300px;top:365px;width:200px"><span class="ni ll d-flex align-items-center justify-content-center"><svg class="i-b"><use href="#i-change"/></svg></span><span class="lbl">set msg.bgcolor</span><i class="prt lf"></i></div>

          <!-- bottom group -->
          <div class="fn cp d-flex align-items-center" style="left:20px;top:565px;width:180px"><span class="ni ll d-flex align-items-center justify-content-center"><svg class="i-c"><use href="#i-rpi"/></svg></span><span class="lbl em">Patients Toilet Alarm</span><i class="prt rt"></i></div>
          <div class="stat" style="left:28px;top:598px"><b></b>0</div>
          <div class="fn cy d-flex align-items-center" style="left:240px;top:565px;width:180px"><span class="ni ll d-flex align-items-center justify-content-center"><svg class="i-b"><use href="#i-change"/></svg></span><span class="lbl">set flow.toiletalarm</span><i class="prt lf"></i><i class="prt rt"></i></div>
          <div class="fn ci d-flex align-items-center" style="left:40px;top:665px;width:140px"><span class="nbtn bl"><b class="ci"></b></span><span class="ni ll d-flex align-items-center justify-content-center"><svg class="i-a"><use href="#i-inject"/></svg></span><span class="lbl">timestamp ↻</span><i class="prt rt"></i></div>
          <div class="fn cy d-flex align-items-center" style="left:220px;top:665px;width:160px"><span class="ni ll d-flex align-items-center justify-content-center"><svg class="i-b"><use href="#i-change"/></svg></span><span class="lbl">set msg.payload</span><i class="prt lf"></i><i class="prt rt"></i></div>
          <div class="fn cd d-flex flex-row-reverse align-items-center" style="left:400px;top:645px;width:160px"><span class="nbtn br"><b class="cd"></b></span><span class="ni rr d-flex align-items-center justify-content-center"><svg class="i-g"><use href="#i-debug"/></svg></span><span class="lbl em">Alarm By Toilet</span><i class="prt lf"></i></div>
          <div class="fn cy d-flex align-items-center" style="left:400px;top:685px;width:240px"><span class="ni ll d-flex align-items-center justify-content-center"><svg class="i-b"><use href="#i-switch"/></svg></span><span class="lbl em">Alarm by Bath Room Toilet</span><i class="prt lf"></i><i class="prt rt up"></i><i class="prt rt dn"></i></div>
          <div class="fn cd d-flex flex-row-reverse align-items-center" style="left:540px;top:805px;width:100px"><span class="nbtn br"><b class="cd"></b></span><span class="ni rr d-flex align-items-center justify-content-center"><svg class="i-g"><use href="#i-debug"/></svg></span><span class="lbl em">false</span><i class="prt lf"></i></div>
          <div class="fn cy d-flex align-items-center" style="left:720px;top:645px;width:280px"><span class="ni ll d-flex align-items-center justify-content-center"><svg class="i-b"><use href="#i-change"/></svg></span><span class="lbl em">Trigger Alarm in Bathroom by Toilet</span><i class="prt lf"></i><i class="prt rt"></i></div>
          <div class="fn cv d-flex align-items-center" style="left:1000px;top:505px;width:160px"><span class="ni ll d-flex align-items-center justify-content-center"><svg class="i-b"><use href="#i-trigger"/></svg></span><span class="lbl">trigger &amp; block</span><i class="prt lf"></i><i class="prt rt"></i></div>
          <div class="fn cb d-flex align-items-center" style="left:1200px;top:505px;width:300px"><span class="ni ll d-flex align-items-center justify-content-center"><svg class="i-e"><use href="#i-file"/></svg></span><span class="lbl">/home/pi/thereisaproblemintheroom</span><i class="prt lf"></i></div>
          <div class="fn cv d-flex align-items-center" style="left:1300px;top:545px;width:160px"><span class="ni ll d-flex align-items-center justify-content-center"><svg class="i-d"><use href="#i-delay"/></svg></span><span class="lbl">delay 3s</span><i class="prt lf"></i></div>
          <div class="fn cy d-flex align-items-center" style="left:1060px;top:605px;width:160px"><span class="ni ll d-flex align-items-center justify-content-center"><svg class="i-b"><use href="#i-change"/></svg></span><span class="lbl">set msg.payload</span><i class="prt lf"></i><i class="prt rt"></i></div>
          <div class="fn cn d-flex align-items-center" style="left:1300px;top:705px;width:200px"><span class="ni ll d-flex align-items-center justify-content-center"><svg class="i-b"><use href="#i-hand"/></svg></span><span class="lbl">Reset Bathroom</span><i class="prt lf"></i></div>
          <div class="fn ci d-flex align-items-center" style="left:1120px;top:785px;width:140px"><span class="nbtn bl"><b class="ci"></b></span><span class="ni ll d-flex align-items-center justify-content-center"><svg class="i-a"><use href="#i-inject"/></svg></span><span class="lbl">timestamp ¹</span><i class="prt rt"></i></div>
          <div class="fn cy d-flex align-items-center" style="left:1290px;top:785px;width:200px"><span class="ni ll d-flex align-items-center justify-content-center"><svg class="i-b"><use href="#i-change"/></svg></span><span class="lbl">set msg.bgcolor</span><i class="prt lf"></i></div>
        </div>
        <div class="vbar sbar-v d-flex flex-column">
          <span class="au"></span>
          <div class="thumb-v"></div>
          <span class="ad mt-auto mx-auto mb-2"></span>
        </div>
      </div>
      <div class="hbar d-flex align-items-center">
        <span class="al"></span>
        <div class="thumb-h"></div>
        <span class="ar ms-auto"></span>
        <span class="corner ms-2"></span>
      </div>
      <div class="wfoot d-flex align-items-center justify-content-end">
        <span class="fbtn d-flex align-items-center justify-content-center me-1"><svg width="15" height="15" viewBox="0 0 15 15"><path d="M1 2.500l4-1 5 1 4-1v11l-4 1-5-1-4 1zM5 1.500v11M10 2.500v11" fill="none" stroke="currentColor"/></svg></span>
        <span class="fbtn d-flex align-items-center justify-content-center"><svg width="11" height="11" viewBox="0 0 11 11"><path d="M0 5.500h11" stroke="currentColor" stroke-width="3"/></svg></span>
        <span class="fbtn d-flex align-items-center justify-content-center"><svg width="12" height="12" viewBox="0 0 12 12"><circle cx="6" cy="6" r="4.500" fill="none" stroke="currentColor" stroke-width="1.600"/></svg></span>
        <span class="fbtn d-flex align-items-center justify-content-center"><svg width="11" height="11" viewBox="0 0 11 11"><path d="M0 5.500h11M5.500 0v11" stroke="currentColor" stroke-width="3"/></svg></span>
      </div>
    </section>

    <!-- splitter -->
    <div class="split d-flex align-items-center"><span></span></div>

    <!-- sidebar -->
    <aside class="side d-flex flex-column">
      <div class="stabs d-flex">
        <div class="stab d-flex align-items-center">
          <svg width="12" height="13" viewBox="0 0 14 13" class="me-1 flex-shrink-0"><path d="M0 12.500h14" stroke="#777"/><path d="M2.500 7v5M5.500 4v8M8.500 1v11M11.500 5v7" stroke="#777" stroke-width="1.400"/></svg>dashboard
        </div>
        <div class="sbtns d-flex align-items-center">
          <span class="sbtn d-flex align-items-center justify-content-center"><svg width="8" height="14" viewBox="0 0 8 14"><path d="M2.500 0h3v3h-3zM1 5h4.500v7H7v2H1v-2h1.500V7H1z" fill="currentColor"/></svg></span>
          <span class="sbtn d-flex align-items-center justify-content-center"><svg width="14" height="14" viewBox="0 0 14 14"><path d="M4 1h9l-2.500 9H1.500zM1.500 10c-.8 1.500-.5 3 1 3H11" fill="currentColor" stroke="currentColor"/></svg></span>
          <span class="sbtn d-flex align-items-center justify-content-center"><svg width="14" height="14" viewBox="0 0 14 14"><path d="M4.500 1.500h5v3h-5zM3.500 5h7v8h-7z" fill="currentColor"/><path d="M1 3l3 2.500M13 3l-3 2.500M0 8h3.500M14 8h-3.500M1 13l2.500-2.500M13 13l-2.500-2.500" stroke="currentColor"/></svg></span>
          <span class="sbtn d-flex align-items-center justify-content-center"><svg width="14" height="14"><use href="#i-gear"/></svg></span>
          <span class="sbtn d-flex align-items-center justify-content-center"><svg width="14" height="16" viewBox="0 0 14 16"><ellipse cx="7" cy="3" rx="6.500" ry="2.500" fill="currentColor"/><path d="M.5 4.500c0 3 13 3 13 0V7c0 3-13 3-13 0zM.5 8.500c0 3 13 3 13 0V13c0 3-13 3-13 0z" fill="currentColor"/></svg></span>
          <span class="car scar"></span>
        </div>
      </div>
      <div class="smid d-flex">
        <div class="spane">
          <div class="itabs d-flex">
            <div class="itab on d-flex align-items-center">Layout</div>
            <div class="itab d-flex align-items-center">Site</div>
            <div class="itab d-flex align-items-center">Theme</div>
            <svg class="xlink" width="15" height="15" viewBox="0 0 15 15"><path d="M7 3H2.500A1.500 1.500 0 0 0 1 4.500v8A1.500 1.500 0 0 0 2.500 14h8a1.500 1.500 0 0 0 1.500-1.500V9" fill="none" stroke="currentColor" stroke-width="1.300"/><path d="M6 9l7-7M9 1h5v5" fill="none" stroke="currentColor" stroke-width="1.500"/></svg>
          </div>
          <div class="tl-head d-flex align-items-start">
            <span>Tabs &amp; Links</span>
            <div class="tbs d-flex">
              <span class="tb s d-flex align-items-center justify-content-center"><svg width="7" height="7" viewBox="0 0 10 10"><path d="M1 5l4-3 4 3M1 9l4-3 4 3" fill="none" stroke="currentColor" stroke-width="1.500"/></svg></span>
              <span class="tb s d-flex align-items-center justify-content-center"><svg width="7" height="7" viewBox="0 0 10 10"><path d="M1 1l4 3 4-3M1 5l4 3 4-3" fill="none" stroke="currentColor" stroke-width="1.500"/></svg></span>
              <span class="tb m d-flex align-items-center justify-content-center"><svg width="7" height="7" viewBox="0 0 8 8" class="me-1"><path d="M4 0v8M0 4h8" stroke="currentColor" stroke-width="2"/></svg>tab</span>
              <span class="tb l d-flex align-items-center justify-content-center"><svg width="7" height="7" viewBox="0 0 8 8" class="me-1"><path d="M4 0v8M0 4h8" stroke="currentColor" stroke-width="2"/></svg>link</span>
            </div>
          </div>
          <div class="tree">
            <div class="treebody d-flex">
              <div class="treelist d-flex flex-column">
                <div class="tr1 d-flex align-items-center"><svg class="chev" width="8" height="6" viewBox="0 0 8 6"><path d="M1 1l3 3 3-3" fill="none" stroke="currentColor" stroke-width="1.200"/></svg><svg class="tric" width="16" height="15" viewBox="0 0 16 15"><path d="M2 2h12v11H2z" fill="none" stroke="currentColor"/><path d="M5 5h7v5H5z" fill="none" stroke="currentColor"/><path d="M0 0h3v3H0zM13 0h3v3h-3zM0 12h3v3H0zM13 12h3v3h-3z" fill="currentColor"/></svg><span>Alarm System</span></div>
                <div class="tr2 d-flex align-items-center"><svg class="chev" width="8" height="6" viewBox="0 0 8 6"><path d="M1 1l3 3 3-3" fill="none" stroke="currentColor" stroke-width="1.200"/></svg><svg class="tric" width="13" height="12" viewBox="0 0 13 12"><path d="M.5.5h12v11H.5zM.5 4h12M.5 8h12M4.500 4v7.500M8.500 4v7.500" fill="none" stroke="currentColor"/></svg><span>Patient Number 001 Alarm</span></div>
                <div class="tr3 d-flex align-items-center"><svg class="tric" width="15" height="13"><use href="#i-tree-img"/></svg><span>Reset Patient 001s Room Alarm</span></div>
                <div class="tr3 d-flex align-items-center"><svg class="tric" width="15" height="13"><use href="#i-tree-img"/></svg><span>Reset Bathroom Toilet Alarm</span></div>
                <div class="tr3 d-flex align-items-center"><svg class="tric" width="15" height="13"><use href="#i-tree-img"/></svg><span>Reset Bathroom Bath Alarm</span></div>
                <div class="tr3 d-flex align-items-center"><svg class="tric" width="15" height="13"><use href="#i-tree-img"/></svg><span>Reset Patient 001s Fall</span></div>
                <div class="trline"></div>
              </div>
              <div class="sbar-t d-flex flex-column">
                <span class="au"></span>
                <span class="ad pale mt-auto mx-auto mb-2"></span>
              </div>
            </div>
            <div class="hb d-flex align-items-center">
              <span class="al"></span>
              <div class="thumb-t"></div>
              <span class="ar ms-auto"></span>
              <span class="co ms-2"></span>
            </div>
          </div>
        </div>
        <div class="sbar-v d-flex flex-column">
          <span class="au"></span>
          <span class="ad pale mt-auto mx-auto mb-2"></span>
        </div>
      </div>
      <div class="sfoot"></div>
    </aside>
  </main>
</div>
<script src="https://cdn.jsdelivr.net/npm/bootstrap@5.3.0/dist/js/bootstrap.bundle.min.js"></script>
</body>
</html>
